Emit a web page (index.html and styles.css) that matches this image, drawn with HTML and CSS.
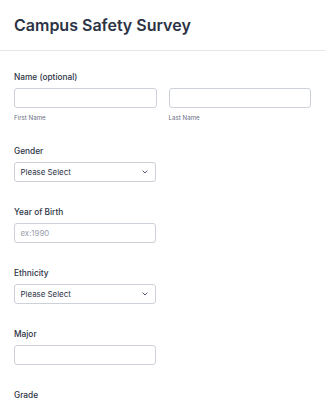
FILE: index.html
```html
<!DOCTYPE html>
<html>
<head>
<meta charset="utf-8">
<link rel="stylesheet" href="styles.css">
</head>
<body>
<header class="header">
  <h1 class="title">Campus Safety Survey</h1>
</header>
<form class="form">
  <div class="field field-name">
    <div class="label">Name (optional)</div>
    <div class="name-row">
      <div class="name-col">
        <div class="input"></div>
        <div class="sublabel">First Name</div>
      </div>
      <div class="name-col">
        <div class="input"></div>
        <div class="sublabel">Last Name</div>
      </div>
    </div>
  </div>
  <div class="field">
    <div class="label">Gender</div>
    <div class="input select">
      <span class="select-text">Please Select</span>
      <svg class="chev" width="6" height="4" viewBox="0 0 6 4"><path d="M0.6 0.6 L3 3 L5.4 0.6" fill="none" stroke="#555b6e" stroke-width="1"/></svg>
    </div>
  </div>
  <div class="field">
    <div class="label">Year of Birth</div>
    <div class="input short"><span class="placeholder">ex:1990</span></div>
  </div>
  <div class="field">
    <div class="label">Ethnicity</div>
    <div class="input select">
      <span class="select-text">Please Select</span>
      <svg class="chev" width="6" height="4" viewBox="0 0 6 4"><path d="M0.6 0.6 L3 3 L5.4 0.6" fill="none" stroke="#555b6e" stroke-width="1"/></svg>
    </div>
  </div>
  <div class="field">
    <div class="label">Major</div>
    <div class="input short"></div>
  </div>
  <div class="field">
    <div class="label">Grade</div>
  </div>
</form>
</body>
</html>
```

FILE: styles.css
```css
html, body {
  margin: 0;
  padding: 0;
  background: #ffffff;
  font-family: Inter, "Noto Sans", sans-serif;
  color: #2c3345;
  overflow: hidden;
}
.header {
  padding: 15px 14px 15px 14px;
  border-bottom: 1px solid #e3e5ea;
}
.title {
  margin: 0;
  font-size: 16px;
  line-height: 20px;
  font-weight: 600;
  color: #2c3345;
  letter-spacing: 0;
}
.form {
  padding: 20px 14px 0 14px;
}
.field {
  margin-bottom: 24px;
}
.field-name {
  margin-bottom: 22px;
}
.label {
  font-size: 8.3px;
  line-height: 12px;
  font-weight: 500;
  color: #2c3345;
  margin-bottom: 5px;
}
.name-row {
  display: grid;
  grid-template-columns: 1fr 1fr;
  column-gap: 12px;
}
.input {
  box-sizing: border-box;
  height: 20px;
  border: 1px solid #cdd1da;
  border-radius: 3px;
  background: #fff;
  display: flex;
  align-items: center;
  padding: 0 6px 0 5.5px;
}
.short, .select {
  width: 142px;
}
.select {
  justify-content: space-between;
  padding-right: 7px;
}
.select-text {
  font-size: 7.9px;
  color: #2c3345;
}
.placeholder {
  font-size: 7.8px;
  color: #9aa0ad;
}
.sublabel {
  margin-top: 5px;
  font-size: 6.2px;
  line-height: 10px;
  color: #6a7184;
}
.chev {
  display: block;
}
```
